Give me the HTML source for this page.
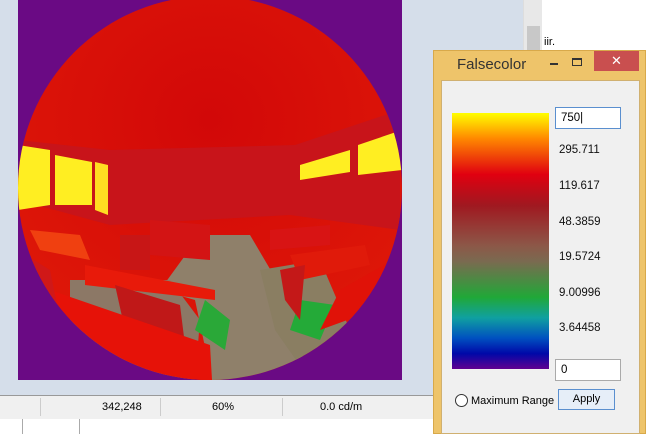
<!DOCTYPE html>
<html><head><meta charset="utf-8"><style>
*{margin:0;padding:0;box-sizing:border-box}
body{width:646px;height:434px;overflow:hidden;background:#d5deea;font-family:"Liberation Sans",sans-serif;position:relative}
.abs{position:absolute}
.lbl{position:absolute;left:559px;font-size:11.5px;color:#111}
</style></head><body>
<div class="abs" style="left:523px;top:0;width:19px;height:396px;background:#e8e8e8;border-left:1px solid #ddd"></div>
<div class="abs" style="left:527px;top:26px;width:13px;height:370px;background:#c8c8c8"></div>
<div class="abs" style="left:542px;top:0;width:104px;height:396px;background:#fff"></div>
<div class="abs" style="left:544px;top:36px;font-size:11px">iir.</div>

<svg class="abs" style="left:18px;top:0" width="384" height="380" viewBox="18 0 384 380">
<defs><clipPath id="c"><circle cx="210" cy="188" r="192"/></clipPath>
<radialGradient id="rg" cx="0.5" cy="0.3" r="0.7"><stop offset="0" stop-color="#d20808"/><stop offset="1" stop-color="#e01a08"/></radialGradient></defs>
<rect x="18" y="0" width="384" height="380" fill="#6a0a84"/>
<g clip-path="url(#c)">
<rect x="0" y="0" width="420" height="400" fill="url(#rg)"/>
<polygon points="110,150 295,145 400,110 400,230 290,215 110,225 18,200 18,140" fill="#c8141a"/>
<polygon points="18,145 50,150 50,205 18,210" fill="#ffee22"/>
<polygon points="55,155 92,162 92,205 55,205" fill="#ffee22"/>
<polygon points="95,162 108,165 108,215 95,210" fill="#ffdd22"/>
<polygon points="300,165 350,150 350,172 300,180" fill="#ffee22"/>
<polygon points="358,145 402,130 402,170 358,175" fill="#ffee22"/>
<polygon points="200,235 250,235 300,320 305,380 212,380 195,300 160,290" fill="#8f806a"/>
<polygon points="70,280 170,280 200,320 195,380 130,380 70,330" fill="#8c7866"/>
<polygon points="260,270 320,260 350,330 310,380 275,330" fill="#8a7e62"/>
<polygon points="205,300 230,320 225,350 195,330" fill="#2aa838"/>
<polygon points="300,300 335,305 320,340 290,330" fill="#24aa38"/>
<polygon points="85,265 215,290 215,300 85,285" fill="#e81a0a"/>
<polygon points="115,285 180,305 185,345 125,330" fill="#c01818"/>
<polygon points="50,290 210,345 212,380 40,380" fill="#e61208"/>
<polygon points="150,220 210,225 210,260 150,255" fill="#d31414"/>
<polygon points="120,235 150,235 150,270 120,270" fill="#c81616"/>
<polygon points="270,230 330,225 330,245 270,250" fill="#d81414"/>
<polygon points="290,255 365,245 370,265 300,280" fill="#e01a0a"/>
<polygon points="280,270 305,265 300,320 285,300" fill="#c41818"/>
<polygon points="340,290 402,255 402,300 320,330" fill="#e01208"/>
<polygon points="30,230 80,235 90,260 40,250" fill="#f04010"/>
<polygon points="18,250 50,270 60,320 18,300" fill="#d01818"/>
</g>
</svg>

<div class="abs" style="left:0;top:395px;width:646px;height:24px;background:#f0f0f0;border-top:1px solid #999"></div>
<div class="abs" style="left:40px;top:398px;width:1px;height:18px;background:#ccc"></div>
<div class="abs" style="left:160px;top:398px;width:1px;height:18px;background:#ccc"></div>
<div class="abs" style="left:282px;top:398px;width:1px;height:18px;background:#ccc"></div>
<div class="abs" style="left:102px;top:401px;font-size:11px">342,248</div>
<div class="abs" style="left:212px;top:401px;font-size:11px">60%</div>
<div class="abs" style="left:320px;top:401px;font-size:11px">0.0 cd/m</div>
<div class="abs" style="left:0;top:419px;width:646px;height:15px;background:#fff"></div>
<div class="abs" style="left:22px;top:419px;width:58px;height:15px;border-left:1px solid #aaa;border-right:1px solid #aaa"></div>

<div class="abs" style="left:433px;top:50px;width:213px;height:384px;background:#eec46a;border:1px solid #d8a94a"></div>
<div class="abs" style="left:457px;top:56px;font-size:15px;color:#333">Falsecolor</div>
<div class="abs" style="left:550px;top:63px;width:8px;height:2px;background:#333"></div>
<div class="abs" style="left:572px;top:58px;width:10px;height:8px;border:1px solid #333;border-top-width:2px"></div>
<div class="abs" style="left:594px;top:51px;width:45px;height:20px;background:#c94f4f;color:#fff;font-size:13px;text-align:center;line-height:20px">✕</div>
<div class="abs" style="left:441px;top:80px;width:199px;height:354px;background:#f0f0f0;border:1px solid #d0b070"></div>
<div class="abs" style="left:452px;top:113px;width:97px;height:256px;background:linear-gradient(#ffff00 0%,#ff8800 10%,#e00010 24%,#a01820 36%,#8c5848 52%,#7a6a50 58%,#20a838 72%,#10a0a0 80%,#0050c0 88%,#0008a8 94%,#600090 100%)"></div>
<div class="abs" style="left:555px;top:107px;width:66px;height:22px;background:#fff;border:1px solid #5a8fcf;font-size:11.5px;padding:4px 0 0 5px">750|</div>
<div class="lbl" style="top:144px">295.711</div>
<div class="lbl" style="top:180px">119.617</div>
<div class="lbl" style="top:216px">48.3859</div>
<div class="lbl" style="top:251px">19.5724</div>
<div class="lbl" style="top:287px">9.00996</div>
<div class="lbl" style="top:322px">3.64458</div>
<div class="abs" style="left:555px;top:359px;width:66px;height:22px;background:#fff;border:1px solid #aaa;font-size:11.5px;padding:4px 0 0 5px">0</div>
<div class="abs" style="left:455px;top:394px;width:13px;height:13px;border-radius:50%;background:#fff;border:1px solid #333"></div>
<div class="abs" style="left:471px;top:395px;font-size:11px">Maximum Range</div>
<div class="abs" style="left:558px;top:389px;width:57px;height:21px;background:#e6eef8;border:1px solid #5a8fcf;font-size:11px;text-align:center;line-height:19px">Apply</div>
</body></html>
